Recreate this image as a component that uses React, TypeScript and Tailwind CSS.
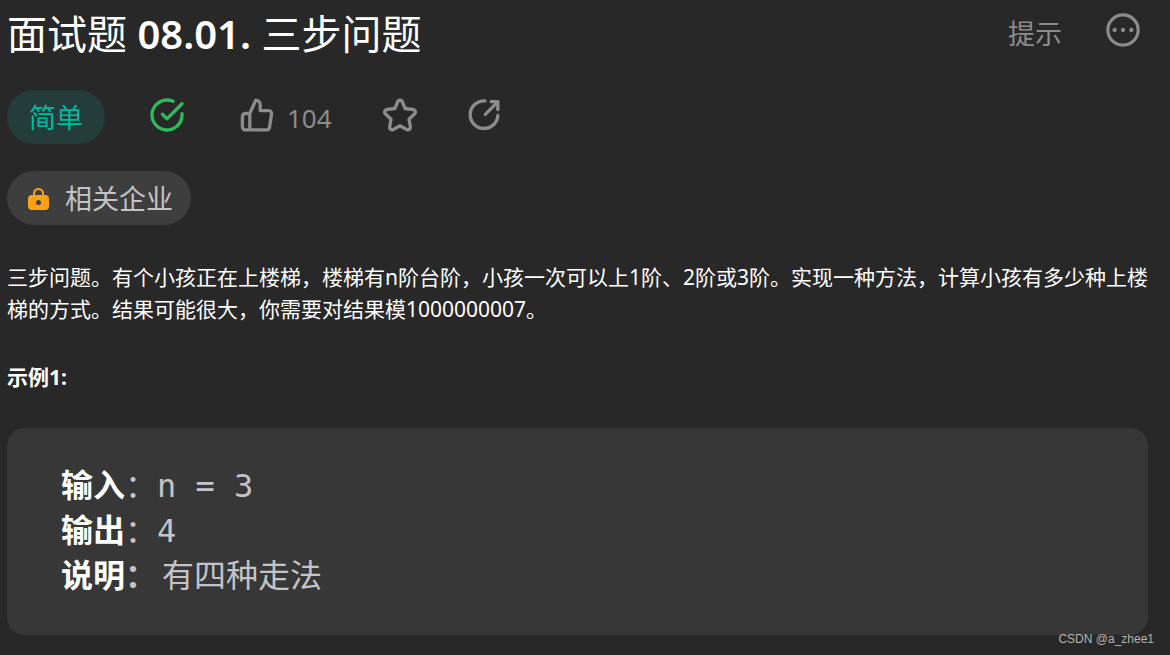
import type { ReactNode } from 'react'

const examples = [
  { label: '输入', value: 'n = 3' },
  { label: '输出', value: '4' },
]

function Icon({ children }: { children: ReactNode }) {
  return (
    <svg viewBox="0 0 24 24" className="h-10 w-10 shrink-0" fill="none" aria-hidden="true">
      {children}
    </svg>
  )
}

function SolvedIcon() {
  return (
    <Icon>
      <path
        fill="currentColor"
        d="M20 12.005v-.828a1 1 0 112 0v.829a10 10 0 11-5.93-9.14 1 1 0 01-.814 1.826A8 8 0 1020 12.005zM8.593 10.852a1 1 0 011.414 0L12 12.844l8.293-8.3a1 1 0 011.415 1.413l-9 9.009a1 1 0 01-1.415 0l-2.7-2.7a1 1 0 010-1.414z"
      />
    </Icon>
  )
}

function LikeIcon() {
  return (
    <Icon>
      <path
        fill="currentColor"
        fillRule="evenodd"
        d="M7.04 9.11l3.297-7.419a1 1 0 01.914-.594 3.67 3.67 0 013.67 3.671V7.33h4.028a2.78 2.78 0 012.78 3.2l-1.228 8.01a2.778 2.778 0 01-2.769 2.363H5.019a2.78 2.78 0 01-2.78-2.78V11.89a2.78 2.78 0 012.78-2.78H7.04zm-2.02 2a.78.78 0 00-.781.781v6.232c0 .431.35.78.78.78H6.69V11.11H5.02zm12.723 7.793a.781.781 0 00.781-.666l1.228-8.01a.78.78 0 00-.791-.898h-5.04a1 1 0 01-1-1V4.77c0-.712-.444-1.32-1.07-1.56L8.69 10.322v8.58h9.053z"
        transform="translate(0 1)"
      />
    </Icon>
  )
}

function StarIcon() {
  return (
    <Icon>
      <path
        stroke="currentColor"
        strokeWidth="2"
        strokeLinejoin="round"
        d="M10.7 3.9c.5-1.1 2.1-1.1 2.6 0l1.8 4.2 4.8.6c1.3.2 1.8 1.7.9 2.6l-3.4 3.2.8 4.6c.2 1.3-1.1 2.2-2.2 1.6L12 18.5l-4 2.2c-1.1.6-2.4-.3-2.2-1.6l.8-4.6-3.4-3.2c-.9-.9-.4-2.4.9-2.6l4.8-.6z"
      />
    </Icon>
  )
}

function ShareIcon() {
  return (
    <Icon>
      <g stroke="currentColor" strokeWidth="2" strokeLinecap="round" strokeLinejoin="round">
        <path d="M12.600 3.500A8.300 8.300 0 1 0 20.300 12.200" />
        <path d="M12.800 11.600l7.300-7.300M16.300 4h4v4.700" />
      </g>
    </Icon>
  )
}

function MoreIcon() {
  return (
    <Icon>
      <circle cx="12" cy="12" r="9.1" stroke="currentColor" strokeWidth="1.9" />
      <g fill="currentColor">
        <circle cx="7" cy="12" r="1.3" />
        <circle cx="12" cy="12" r="1.3" />
        <circle cx="17" cy="12" r="1.3" />
      </g>
    </Icon>
  )
}

function LockIcon() {
  return (
    <svg viewBox="0 0 21 22" className="h-[22px] w-[21px] shrink-0" fill="none" aria-hidden="true">
      <path d="M6 8V5.500a4.500 4.500 0 0 1 9 0V8" stroke="currentColor" strokeWidth="2" />
      <path
        fill="currentColor"
        fillRule="evenodd"
        d="M4 7h13a4 4 0 0 1 4 4v7a4 4 0 0 1-4 4H4a4 4 0 0 1-4-4v-7a4 4 0 0 1 4-4zm6.500 5a2.500 2.500 0 1 0 0 5 2.500 2.500 0 0 0 0-5z"
      />
    </svg>
  )
}

export default function App() {
  return (
    <div className="relative min-h-screen bg-[#282828] pl-[7px] pr-[22px] font-['Noto_Sans','Noto_Sans_CJK_SC',sans-serif] text-white">
      {/* Title bar */}
      <header className="flex items-center justify-between pr-[5px]">
        <h1 className="text-[40px] leading-[68px]">
          面试题 <span className="font-semibold">08.01.</span> 三步问题
        </h1>
        <div className="flex items-center gap-[41px] text-[#8c8c8c]">
          <button className="text-[27px] leading-[68px]">提示</button>
          <button aria-label="更多" className="mb-2">
            <MoreIcon />
          </button>
        </div>
      </header>

      {/* Difficulty and actions */}
      <div className="mt-[22px] flex h-[54px] items-center text-[#8c8c8c]">
        <span className="rounded-full bg-[#243d3a] px-[22px] pt-[2px] text-[27px] leading-[52px] text-[#00b8a3]">
          简单
        </span>
        <span className="mb-1 ml-[42px] text-[#2cbb5d]" title="已解答">
          <SolvedIcon />
        </span>
        <button className="ml-[50px] flex items-center gap-[10px]">
          <span className="mb-1">
            <LikeIcon />
          </span>
          <span className="pt-[2px] text-[26px] leading-[52px]">104</span>
        </button>
        <button aria-label="收藏" className="mb-1 ml-[48px]">
          <StarIcon />
        </button>
        <button aria-label="分享" className="mb-1 ml-[44px]">
          <ShareIcon />
        </button>
      </div>

      <button className="mt-[27px] flex h-[54px] items-center gap-4 rounded-full bg-[#3e3e3e] pl-[21px] pr-[18px] pt-[2px] text-[27px] text-[#c4c4c8]">
        <span className="text-[#ffa116]">
          <LockIcon />
        </span>
        相关企业
      </button>

      {/* Statement */}
      <p className="mt-9 text-[21px] leading-8">
        三步问题。有个小孩正在上楼梯，楼梯有n阶台阶，小孩一次可以上1阶、2阶或3阶。实现一种方法，计算小孩有多少种上楼梯的方式。结果可能很大，你需要对结果模1000000007。
      </p>
      <p className="mt-9 text-[21px] font-bold leading-8">示例1:</p>

      <pre className="mt-[35px] rounded-[18px] bg-[#373737] px-[54px] py-9 font-['DejaVu_Sans_Mono','Noto_Sans_CJK_SC',monospace] text-[32px] leading-[45px] text-[#c4c4c8]">
        {examples.map(({ label, value }) => (
          <div key={label}>
            <strong className="text-white">{label}</strong>：{value}
          </div>
        ))}
        <div>
          <strong className="text-white">说明</strong>
          <strong>：</strong>
          <span className="pl-[5px]">有四种走法</span>
        </div>
      </pre>

      <span className="absolute bottom-2 right-4 font-['Liberation_Sans',sans-serif] text-[12px] leading-4 text-[#b4b4b4]">
        CSDN @a_zhee1
      </span>
    </div>
  )
}
